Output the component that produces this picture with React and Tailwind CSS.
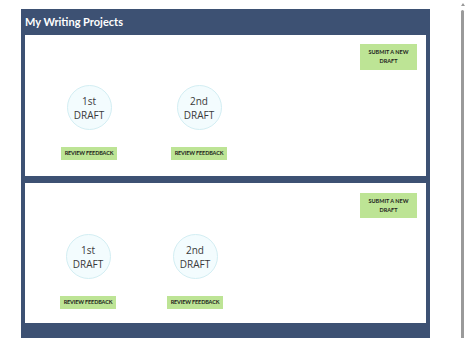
import React from 'react'

const projects = [
  { id: 1, pt: 'pt-[9px]', btnH: 'h-[26px]', rowMt: 'mt-[15px]', pl: 'pl-[36px]', gap: 'gap-[54px]', pb: 'pb-[16px]' },
  { id: 2, pt: 'pt-[10px]', btnH: 'h-[25px]', rowMt: 'mt-[16px]', pl: 'pl-[35px]', gap: 'gap-[51px]', pb: 'pb-[14px]' },
]

function Draft({ label }) {
  return (
    <div className="flex flex-col items-center w-[56px]">
      <div className="w-[45px] h-[45px] rounded-full bg-[#f3fcfe] border border-[#d3eef3] flex flex-col items-center justify-center text-[10px] leading-[14px] text-[#3a3a3a]" style={{ fontFamily: '"Open Sans", sans-serif' }}>
        <span className="block">{label}</span>
        <span className="block">DRAFT</span>
      </div>
      <button className="mt-[17px] w-[56px] h-[13px] bg-[#bde495] text-[5.5px] font-bold text-[#1c1c1c] tracking-tight">
        REVIEW FEEDBACK
      </button>
    </div>
  )
}

function ProjectCard({ p }) {
  return (
    <div className={`bg-white flex flex-col ${p.pt} pr-[9px] ${p.pb}`}>
      <button className={`self-end w-[57px] ${p.btnH} bg-[#bde495] text-[5.5px] leading-[9px] font-bold text-[#1c1c1c]`}>
        SUBMIT A NEW<br />DRAFT
      </button>
      <div className={`flex ${p.rowMt} ${p.pl} ${p.gap}`}>
        <Draft label="1st" />
        <Draft label="2nd" />
      </div>
    </div>
  )
}

export default function App() {
  return (
    <div className="w-[474px] h-[338px] overflow-hidden bg-white flex" style={{ fontFamily: 'Lato, "Open Sans", sans-serif' }}>
      <div className="ml-[21px] mt-[9px] w-[409px] bg-[#3d5173] flex flex-col px-[4px] pb-[40px] self-start">
        <h1 className="h-[26px] flex items-center text-white font-bold text-[11px]">My Writing Projects</h1>
        <div className="flex flex-col gap-[7px]">
          {projects.map(p => <ProjectCard key={p.id} p={p} />)}
        </div>
      </div>
      <div className="ml-[31px] flex flex-col items-center w-[3px]">
        <div className="mt-[3px] w-0 h-0 border-l-[2px] border-r-[2px] border-b-[3px] border-l-transparent border-r-transparent border-b-[#999]" />
        <div className="mt-[4px] w-[3px] flex-1 bg-[#9a9a9a] rounded-t-sm" />
      </div>
    </div>
  )
}
